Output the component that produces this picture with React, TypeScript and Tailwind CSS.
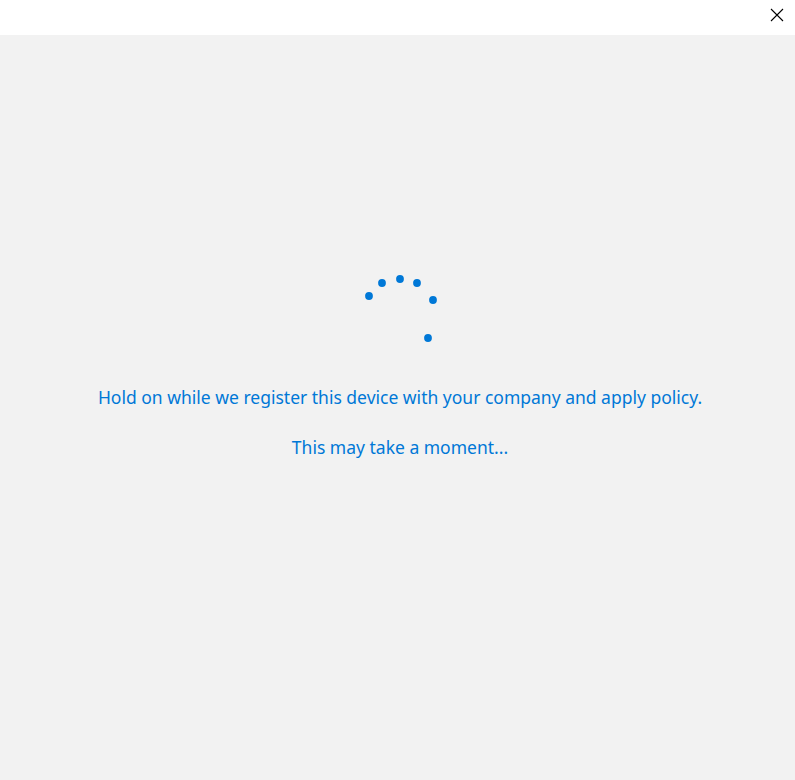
export default function App() {
  const dots: [number, number][] = [
    [19, 31],
    [32, 18],
    [50, 14],
    [67, 18],
    [83, 35],
    [78, 73],
  ];
  return (
    <div className="w-[795px] h-[780px] flex flex-col bg-[#f2f2f2]" style={{ fontFamily: '"Noto Sans", "Open Sans", sans-serif' }}>
      <div className="h-[35px] bg-white flex justify-end items-start shrink-0">
        <button className="w-[36px] h-[30px] flex items-center justify-center">
          <svg width="14" height="14" viewBox="0 0 14 14">
            <path d="M1 1 L13 13 M13 1 L1 13" stroke="#000" strokeWidth="1.1" fill="none" />
          </svg>
        </button>
      </div>
      <div className="flex flex-col items-center pt-[230px] pl-[5px]">
        <svg width="100" height="80" viewBox="0 0 100 80">
          {dots.map(([x, y], i) => (
            <circle key={i} cx={x} cy={y} r="3.9" fill="#0078d7" />
          ))}
        </svg>
        <p className="mt-[40px] text-[17.5px] leading-[24px] text-[#0078d7] whitespace-nowrap">
          Hold on while we register this device with your company and apply policy.
        </p>
        <p className="mt-[26px] text-[17.5px] leading-[24px] text-[#0078d7] whitespace-nowrap">This may take a moment...</p>
      </div>
    </div>
  );
}
